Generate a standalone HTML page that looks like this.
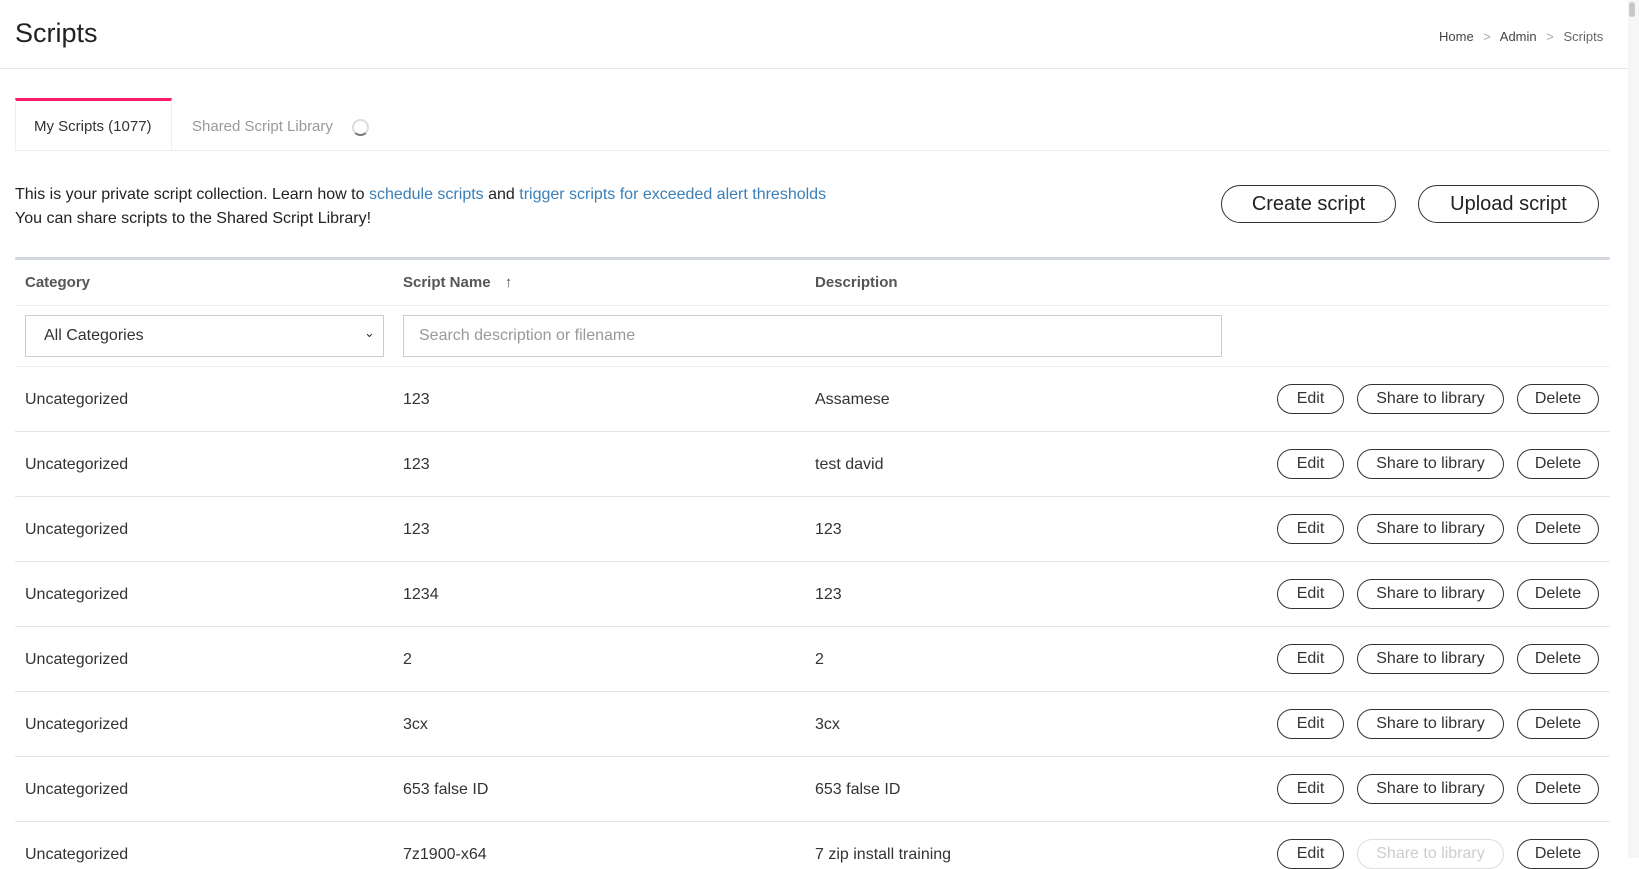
<!DOCTYPE html>
<html><head><style>
body{margin:0;width:1639px;height:858px;overflow:hidden;background:#fff;font-family:"Liberation Sans",sans-serif;color:#333;position:relative}
.a{position:absolute;white-space:nowrap}
.btn{position:absolute;border:1px solid #333;border-radius:16px;box-sizing:border-box;text-align:center;font-size:15px;color:#333;background:#fff}
.line{position:absolute;left:15px;width:1595px;height:1px;background:#e4e4e4}
a{color:#3a7fb8;text-decoration:none}
</style></head><body>
<div class="a" style="left:15px;top:18px;font-size:27px;color:#222">Scripts</div>
<div class="a" style="left:1439px;top:29px;font-size:13px;color:#444">Home <span style="color:#aaa;margin:0 6px">&gt;</span> Admin <span style="color:#aaa;margin:0 6px">&gt;</span> <span style="color:#666">Scripts</span></div>
<div style="position:absolute;left:0;top:68px;width:1628px;height:1px;background:#e6e6e6"></div>
<div style="position:absolute;left:1628px;top:0;width:11px;height:858px;background:#f6f6f6"></div>
<div style="position:absolute;left:1629px;top:2px;width:6px;height:15px;background:#c8c8c8;border-radius:3px"></div>
<div style="position:absolute;left:15px;top:98px;width:157px;height:52px;background:#fff;border-top:3px solid #ff1a6a;box-sizing:border-box;border-left:1px solid #eee;border-right:1px solid #eee"></div>
<div class="line" style="top:150px;background:#ececec"></div>
<div class="a" style="left:34px;top:118px;font-size:15px;color:#333">My Scripts (1077)</div>
<div class="a" style="left:192px;top:118px;font-size:15px;color:#999">Shared Script Library</div>
<div style="position:absolute;left:352px;top:119px;width:13px;height:13px;border:2px solid #ddd;border-bottom-color:#777;border-radius:50%"></div>
<div class="a" style="left:15px;top:183px;font-size:16px;line-height:24px;color:#222">This is your private script collection. Learn how to <a>schedule scripts</a> and <a>trigger scripts for exceeded alert thresholds</a><br>You can share scripts to the Shared Script Library!</div>
<div class="btn" style="left:1221px;top:185px;width:175px;height:38px;border-radius:19px;font-size:20px;line-height:36px;color:#222">Create script</div>
<div class="btn" style="left:1418px;top:185px;width:181px;height:38px;border-radius:19px;font-size:20px;line-height:36px;color:#222">Upload script</div>
<div style="position:absolute;left:15px;top:257px;width:1595px;height:3px;background:#d3d7df;border-radius:2px"></div>
<div class="a" style="left:25px;top:274px;font-size:15px;font-weight:bold;color:#555">Category</div>
<div class="a" style="left:403px;top:274px;font-size:15px;font-weight:bold;color:#555">Script Name <span style="margin-left:10px">&#8593;</span></div>
<div class="a" style="left:815px;top:274px;font-size:15px;font-weight:bold;color:#555">Description</div>
<div class="line" style="top:305px;background:#efefef"></div>
<div style="position:absolute;left:25px;top:315px;width:359px;height:42px;border:1px solid #c9cdd6;box-sizing:border-box"></div>
<div class="a" style="left:44px;top:327px;font-size:16px;color:#333">All Categories</div>
<div class="a" style="left:364px;top:325px;font-size:13px;color:#333">&#8964;</div>
<div style="position:absolute;left:403px;top:315px;width:819px;height:42px;border:1px solid #c9cdd6;box-sizing:border-box"></div>
<div class="a" style="left:419px;top:327px;font-size:16px;color:#999">Search description or filename</div>
<div class="line" style="top:366px;background:#efefef"></div>
<div id="rows"></div>
<script>
var d=[["123","Assamese"],["123","test david"],["123","123"],["1234","123"],["2","2"],["3cx","3cx"],["653 false ID","653 false ID"],["7z1900-x64","7 zip install training"]];
var h="";
d.forEach(function(r,i){var y=366+i*65;
h+='<div class="a" style="left:25px;top:'+(y+25)+'px;font-size:16px">Uncategorized</div>';
h+='<div class="a" style="left:403px;top:'+(y+25)+'px;font-size:16px">'+r[0]+'</div>';
h+='<div class="a" style="left:815px;top:'+(y+25)+'px;font-size:16px">'+r[1]+'</div>';
var by=y+18;
h+='<div class="btn" style="left:1277px;top:'+by+'px;width:67px;height:30px;line-height:28px;font-size:16px">Edit</div>';
h+='<div class="btn" style="left:1357px;top:'+by+'px;width:147px;height:30px;line-height:28px;font-size:16px;'+(i==7?'color:#ccc;border-color:#ddd':'')+'">Share to library</div>';
h+='<div class="btn" style="left:1517px;top:'+by+'px;width:82px;height:30px;line-height:28px;font-size:16px">Delete</div>';
if(i<7)h+='<div class="line" style="top:'+(y+65)+'px"></div>';
});
document.getElementById("rows").innerHTML=h;
</script>
</body></html>
